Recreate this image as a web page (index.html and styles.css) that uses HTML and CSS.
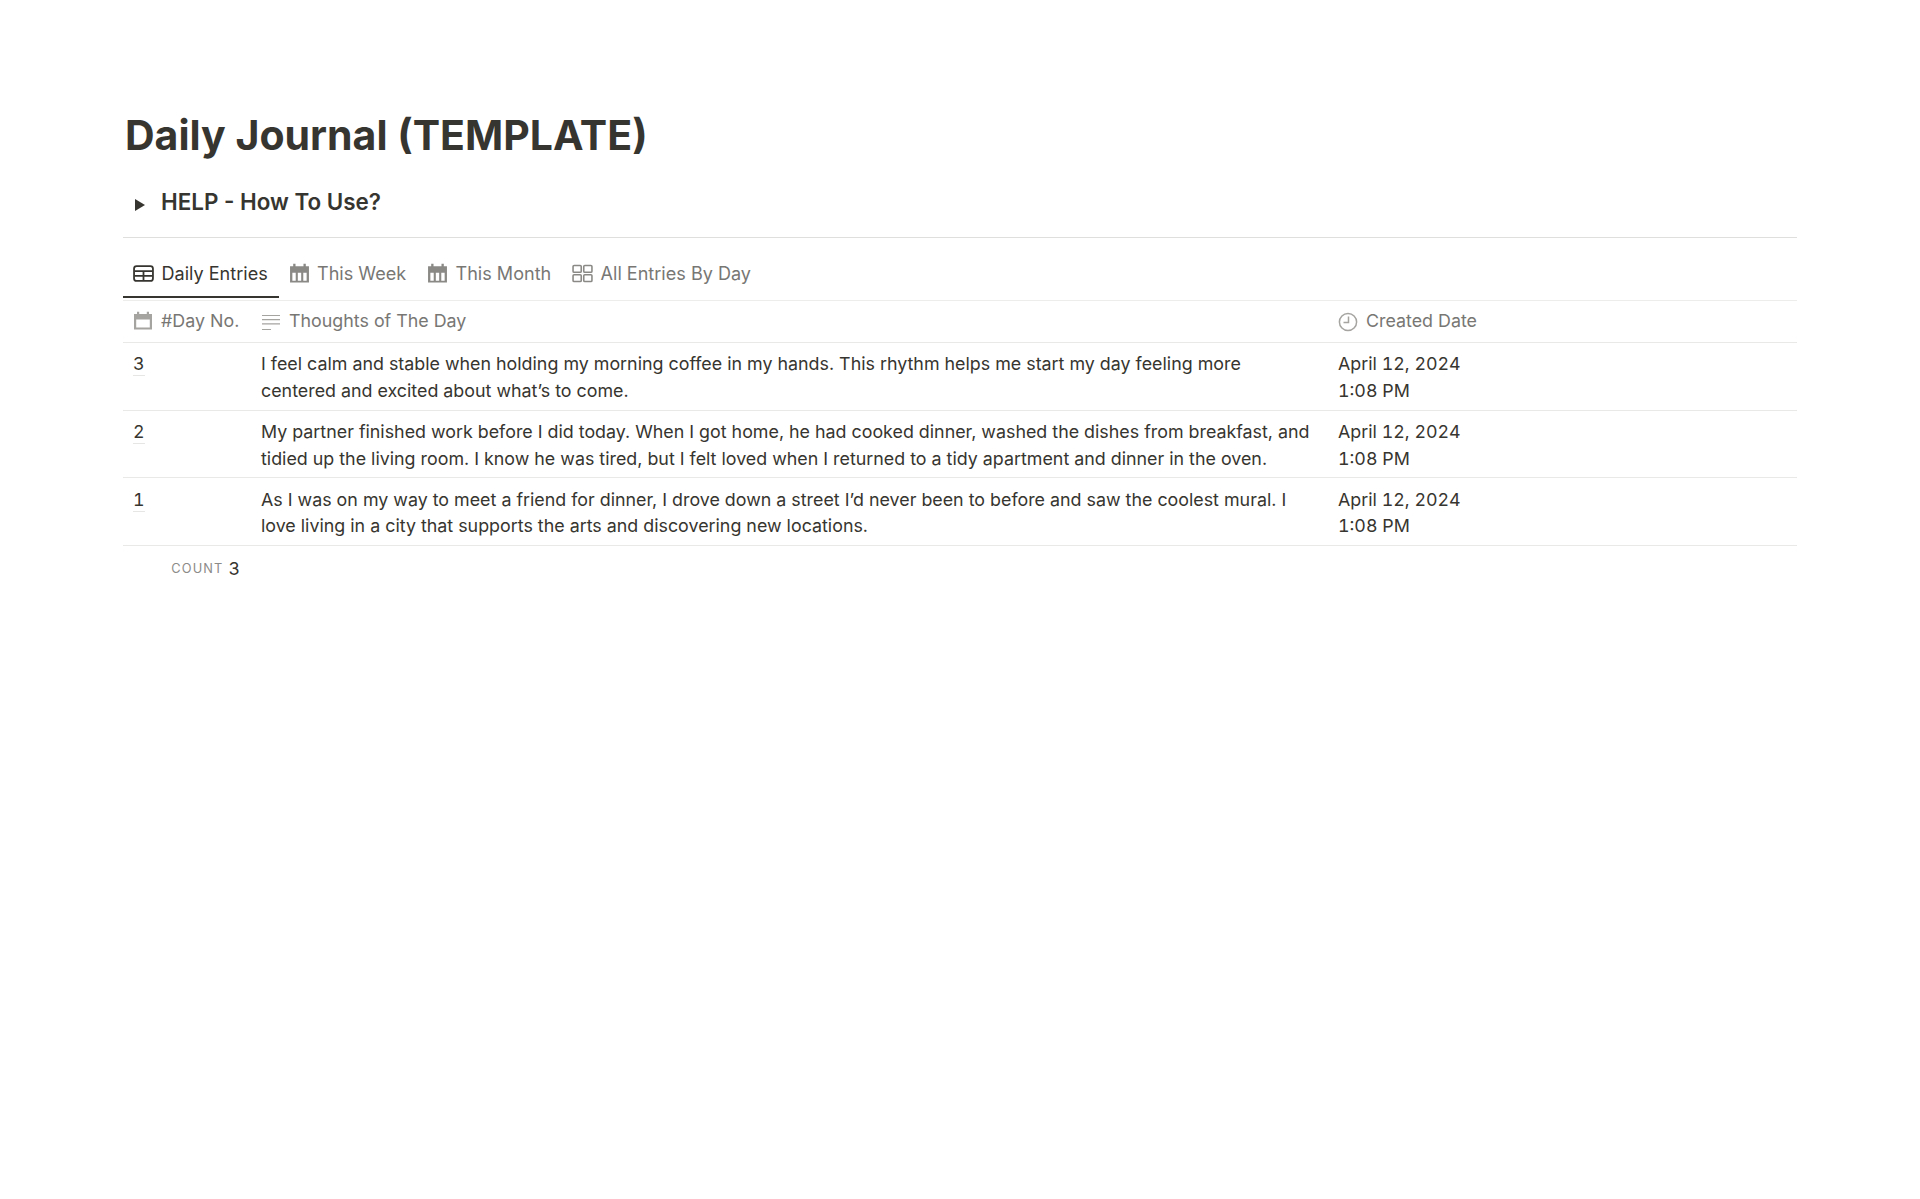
FILE: index.html
```html
<!DOCTYPE html>
<html lang="en">

<head>
    <meta charset="UTF-8">
    <title>Daily Journal (TEMPLATE)</title>
    <link rel="stylesheet" href="styles.css">
</head>

<body>
    <div class="page">
        <h1 class="title">Daily Journal (TEMPLATE)</h1>
        <div class="toggle">
            <span class="toggle-arrow"></span>
            <h3>HELP - How To Use?</h3>
        </div>
        <div class="divider"></div>

        <div class="tabs">
            <div class="tab active">
                <svg class="icon" viewBox="0 0 20 20"><rect x="1" y="2.9" width="18" height="14.2" rx="2.4" fill="none" stroke="currentColor" stroke-width="1.7"/><path d="M1.5 7.8h17M1.5 12.2h17M10 7.8v9" stroke="currentColor" stroke-width="1.7" fill="none"/></svg>
                <span>Daily Entries</span>
            </div>
            <div class="tab">
                <svg class="icon" viewBox="0 0 20 20"><path fill="currentColor" d="M1 3h3V.8h2.2V3h7.6V.8H16V3h3v15.6H1zM3.2 9.4v7.4h3.2V9.4zm5.2 0v7.4h3.2V9.4zm5.2 0v7.4h3.2V9.4z"/></svg>
                <span>This Week</span>
            </div>
            <div class="tab">
                <svg class="icon" viewBox="0 0 20 20"><path fill="currentColor" d="M1 3h3V.8h2.2V3h7.6V.8H16V3h3v15.6H1zM3.2 9.4v7.4h3.2V9.4zm5.2 0v7.4h3.2V9.4zm5.2 0v7.4h3.2V9.4z"/></svg>
                <span>This Month</span>
            </div>
            <div class="tab">
                <svg class="icon" viewBox="0 0 20 20" fill="none" stroke="currentColor" stroke-width="1.5"><rect x="1" y="2.4" width="7.8" height="6.4" rx="1"/><rect x="11.2" y="2.4" width="7.8" height="6.4" rx="1"/><rect x="1" y="11.2" width="7.8" height="6.4" rx="1"/><rect x="11.2" y="11.2" width="7.8" height="6.4" rx="1"/></svg>
                <span>All Entries By Day</span>
            </div>
        </div>

        <div class="table">
            <div class="row head">
                <div class="cell col-day">
                    <svg class="icon" viewBox="0 0 20 20"><path fill="currentColor" d="M1 3h3V.8h2.2V3h7.6V.8H16V3h3v15.6H1zM3.2 8.6v8h13.6v-8z"/></svg>
                    <span>#Day No.</span>
                </div>
                <div class="cell col-text">
                    <svg class="icon" viewBox="0 0 20 20"><path d="M1 3.5h18M1 7.7h18M1 11.9h18M1 17.5h9" stroke="currentColor" stroke-width="1.2" fill="none"/></svg>
                    <span>Thoughts of The Day</span>
                </div>
                <div class="cell col-date">
                    <svg class="icon" viewBox="0 0 20 20" fill="none" stroke="currentColor" stroke-width="1.5"><circle cx="10" cy="10" r="8.6"/><path d="M10.5 4.5v6H5.5"/></svg>
                    <span>Created Date</span>
                </div>
            </div>
            <div class="row">
                <div class="cell col-day"><span class="num">3</span></div>
                <div class="cell col-text">I feel calm and stable when holding my morning coffee in my hands. This rhythm helps me start my day feeling more centered and excited about what’s to come.</div>
                <div class="cell col-date">April 12, 2024<br>1:08 PM</div>
            </div>
            <div class="row">
                <div class="cell col-day"><span class="num">2</span></div>
                <div class="cell col-text">My partner finished work before I did today. When I got home, he had cooked dinner, washed the dishes from breakfast, and tidied up the living room. I know he was tired, but I felt loved when I returned to a tidy apartment and dinner in the oven.</div>
                <div class="cell col-date">April 12, 2024<br>1:08 PM</div>
            </div>
            <div class="row">
                <div class="cell col-day"><span class="num">1</span></div>
                <div class="cell col-text">As I was on my way to meet a friend for dinner, I drove down a street I’d never been to before and saw the coolest mural. I love living in a city that supports the arts and discovering new locations.</div>
                <div class="cell col-date">April 12, 2024<br>1:08 PM</div>
            </div>
        </div>

        <div class="count">
            <span class="count-label">COUNT</span>
            <span class="count-value">3</span>
        </div>
    </div>
</body>

</html>
```
FILE: styles.css
```css
*,
*:before,
*:after {
    box-sizing: border-box;
    margin: 0;
    padding: 0;
}

html,
body {
    width: 100%;
    height: 100%;
    background: #fff;
}

body {
    font-family: Inter, "Liberation Sans", sans-serif;
    font-size: 17.85px;
    color: #37352f;
}

.page {
    padding: 110px 123px 0 123px;
}

.title {
    font-size: 41px;
    font-weight: 700;
    line-height: 50px;
    padding-left: 2px;
    color: #37352f;
}

.toggle {
    display: flex;
    align-items: center;
    height: 36px;
    margin-top: 23px;
    padding-left: 10px;
}

.toggle h3 {
    font-size: 22.4px;
    font-weight: 600;
    margin-left: 16px;
}

.toggle-arrow {
    width: 0;
    height: 0;
    margin: 8px 0 0 2px;
    border-left: 10px solid #37352f;
    border-top: 6px solid transparent;
    border-bottom: 6px solid transparent;
}

.divider {
    height: 1px;
    margin-top: 18px;
    background: #dfdfde;
}

.tabs {
    display: flex;
    height: 63px;
    padding-top: 13px;
    border-bottom: 1px solid #ededec;
}

.tab {
    display: flex;
    align-items: center;
    height: 47px;
    padding: 0 10.8px 1px 10px;
    font-size: 18.07px;
    color: #787774;
    border-bottom: 2px solid transparent;
}

.tab span {
    margin-left: 7.5px;
}

.tab .icon {
    color: #8a8986;
}

.tab.active {
    color: #37352f;
    border-bottom-color: #37352f;
}

.tab.active .icon {
    color: #37352f;
}

.icon {
    width: 21px;
    height: 21px;
    flex: none;
}

.row {
    display: flex;
    height: 67.6px;
    border-bottom: 1px solid #e9e9e7;
    line-height: 26.6px;
}

.row.head {
    height: 42px;
    color: #787774;
}

.row.head .cell {
    display: flex;
    align-items: center;
    padding-top: 0;
    white-space: nowrap;
}

.row.head .icon {
    width: 20px;
    height: 20px;
    color: #a5a4a1;
    margin-right: 8px;
}

.row.head .col-day .icon {
    margin-bottom: 2px;
}

.cell {
    padding: 8.4px 11px 0 11px;
}

.cell.col-day {
    width: 127px;
    padding-left: 10px;
}

.col-text {
    width: 1077px;
}

.col-date {
    flex: 1;
}

.row .col-date,
.num,
.count-value {
    font-variant-numeric: tabular-nums;
}

.row.head .col-date {
    font-variant-numeric: normal;
}

.num {
    padding-bottom: 1px;
    border-bottom: 1px solid #e6e6e4;
}

.count {
    display: flex;
    align-items: center;
    justify-content: flex-end;
    width: 117px;
    height: 45px;
    gap: 5px;
}

.count-label {
    font-size: 12.8px;
    letter-spacing: 1.1px;
    color: #8c8b88;
}

.count-value {
    font-size: 17.85px;
}
```
